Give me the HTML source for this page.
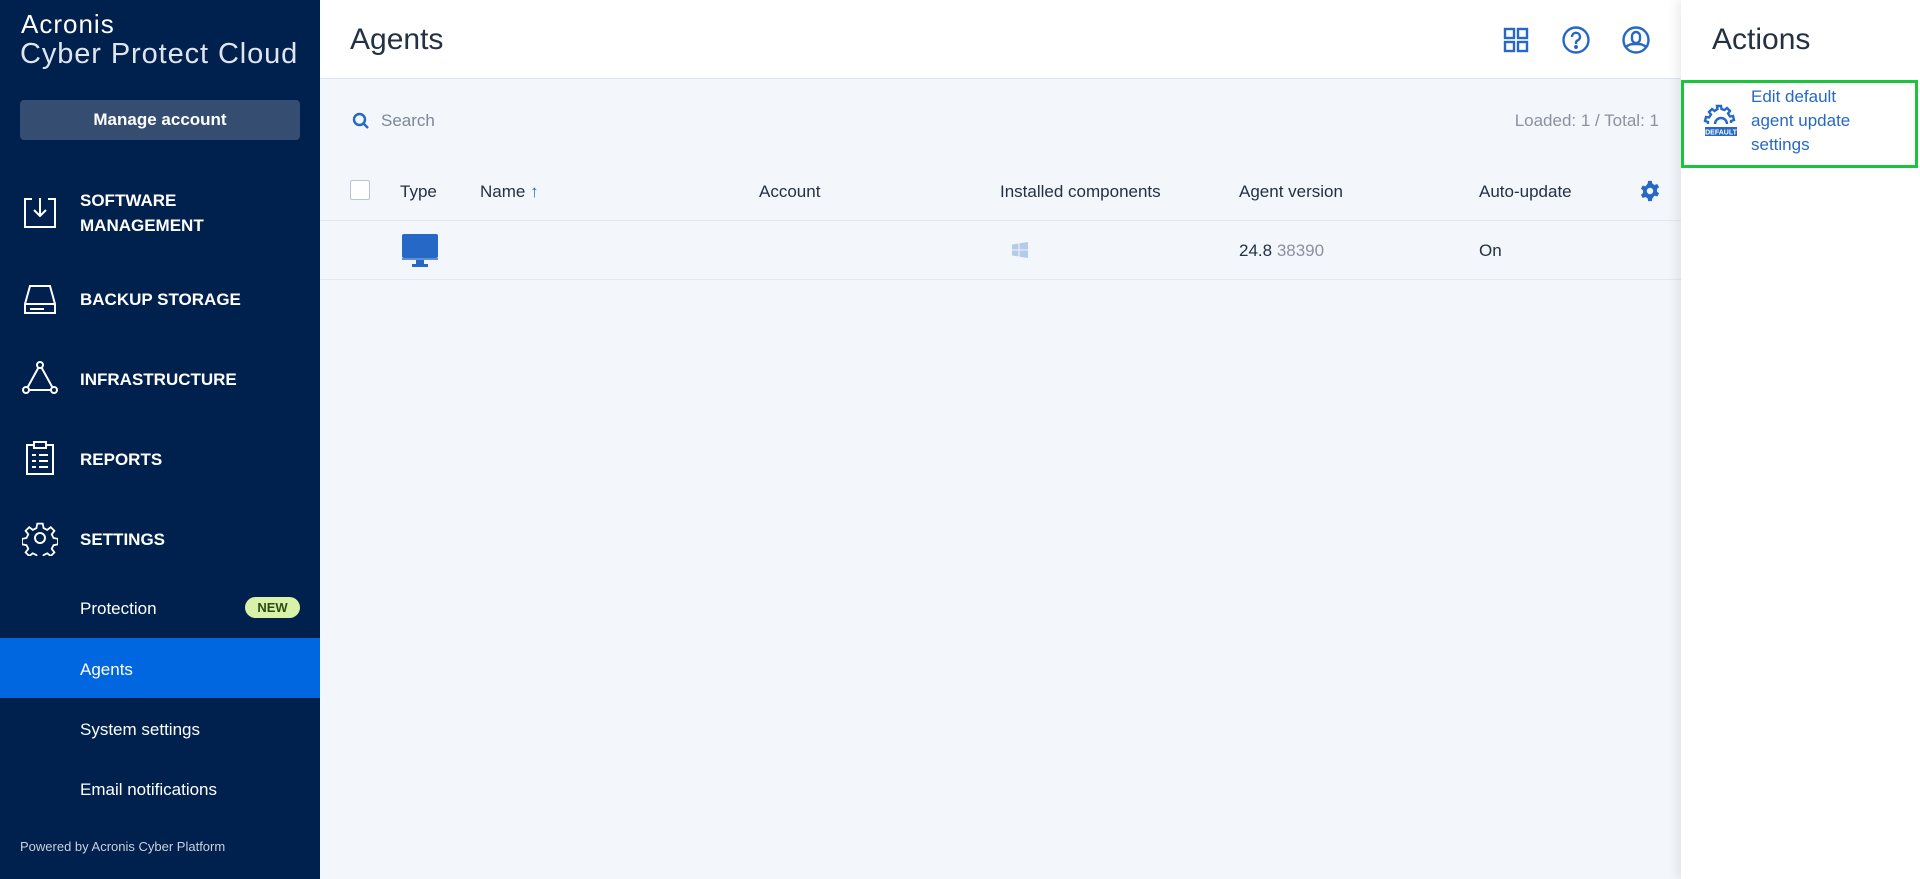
<!DOCTYPE html>
<html><head><meta charset="utf-8"><style>
*{box-sizing:border-box;margin:0;padding:0}
body{width:1920px;height:879px;overflow:hidden;font-family:"Liberation Sans",sans-serif;background:#f3f6fb;position:relative;color:#243143}
.side{position:absolute;left:0;top:0;width:320px;height:879px;background:#00204d;color:#fff}
.abs{position:absolute}
.nav{position:absolute;left:80px;font-weight:bold;font-size:17px;line-height:25px}
.ico{position:absolute;left:22px}
.sub{position:absolute;left:80px;font-size:17px;transform:translateY(-50%)}
.main{position:absolute;left:320px;top:0;width:1361px;height:879px}
.hdr{position:absolute;left:0;top:0;width:1361px;height:79px;background:#fff;border-bottom:1px solid #dde4ef}
.th{position:absolute;top:182px;font-size:17px;color:#243143}
.right{position:absolute;left:1681px;top:0;width:239px;height:879px;background:#fff;box-shadow:-4px 0 10px rgba(0,0,0,.08)}
</style></head><body>
<div class="side">
 <div class="abs" style="left:21px;top:9px;font-size:26px;letter-spacing:1px">Acronis</div>
 <div class="abs" style="left:20px;top:38px;font-size:29px;letter-spacing:.9px;color:#dfe5ee">Cyber Protect Cloud</div>
 <div class="abs" style="left:20px;top:100px;width:280px;height:40px;background:#354d70;border-radius:4px;text-align:center;line-height:40px;font-weight:bold;font-size:17px">Manage account</div>

 <svg class="ico" style="top:195px" width="36" height="36" viewBox="0 0 36 36" fill="none" stroke="#fff" stroke-width="2"><path d="M10 4H3v28h30V4h-7M18 3v18M12 15l6 6 6-6"/></svg>
 <div class="nav" style="top:188px">SOFTWARE<br>MANAGEMENT</div>

 <svg class="ico" style="top:282px" width="36" height="36" viewBox="0 0 36 36" fill="none" stroke="#fff" stroke-width="2"><path d="M8 4h20l5 18v9H3v-9zM3 22h30M8 27h14"/></svg>
 <div class="nav" style="top:287px">BACKUP STORAGE</div>

 <svg class="ico" style="top:360px" width="36" height="36" viewBox="0 0 36 36" fill="none" stroke="#fff" stroke-width="2"><circle cx="18" cy="5" r="3"/><circle cx="4" cy="30" r="3"/><circle cx="32" cy="30" r="3"/><path d="M16.5 7.5L5.5 27.5M19.5 7.5l11 20M7 30h22"/></svg>
 <div class="nav" style="top:367px">INFRASTRUCTURE</div>

 <svg class="ico" style="top:440px" width="36" height="36" viewBox="0 0 36 36" fill="none" stroke="#fff" stroke-width="2"><path d="M12 5H5v29h26V5h-7M12 2h12v6H12zM10 15h4M17 15h9M10 21h4M17 21h9M10 27h4M17 27h9"/></svg>
 <div class="nav" style="top:447px">REPORTS</div>

 <svg class="ico" style="top:520px" width="36" height="36" viewBox="0 0 36 36" fill="none" stroke="#fff" stroke-width="2"><circle cx="18" cy="18" r="5"/><path d="M15 2h6l1 5 4 2 4-3 4 4-3 4 2 4 5 1v6l-5 1-2 4 3 4-4 4-4-3-4 2-1 5h-6l-1-5-4-2-4 3-4-4 3-4-2-4-5-1v-6l5-1 2-4-3-4 4-4 4 3 4-2z" transform="scale(.9) translate(2 2)"/></svg>
 <div class="nav" style="top:527px">SETTINGS</div>

 <div class="sub" style="top:609px">Protection</div>
 <div class="abs" style="left:245px;top:597px;width:55px;height:21px;border-radius:11px;background:#d9f1a8;color:#2a4d14;font-size:13px;font-weight:bold;text-align:center;line-height:21px">NEW</div>
 <div class="abs" style="left:0;top:638px;width:320px;height:60px;background:#0067e0"></div>
 <div class="sub" style="top:670px">Agents</div>
 <div class="sub" style="top:730px">System settings</div>
 <div class="sub" style="top:790px">Email notifications</div>
 <div class="abs" style="left:20px;top:839px;font-size:13px;color:#c8d1de">Powered by Acronis Cyber Platform</div>
</div>

<div class="main">
 <div class="hdr">
  <div class="abs" style="left:30px;top:23px;font-size:30px;color:#243143">Agents</div>
  <svg class="abs" style="left:1183px;top:27px" width="26" height="26" viewBox="0 0 26 26" fill="none" stroke="#2668c5" stroke-width="2.4"><rect x="2" y="2" width="9" height="9"/><rect x="15" y="2" width="9" height="9"/><rect x="2" y="15" width="9" height="9"/><rect x="15" y="15" width="9" height="9"/></svg>
  <svg class="abs" style="left:1241px;top:25px" width="30" height="30" viewBox="0 0 30 30" fill="none" stroke="#2668c5" stroke-width="2.4"><circle cx="15" cy="15" r="12.5"/><path d="M11 12a4 4 0 1 1 5.5 3.5c-1 .5-1.5 1.3-1.5 2.5v1"/><circle cx="15" cy="22" r=".8" fill="#2668c5"/></svg>
  <svg class="abs" style="left:1301px;top:25px" width="30" height="30" viewBox="0 0 30 30" fill="none" stroke="#2668c5" stroke-width="2.4"><circle cx="15" cy="15" r="12.5"/><rect x="11" y="7" width="8" height="11" rx="4"/><path d="M5 22c3-3 6-3 10-3s7 0 10 3"/></svg>
 </div>
 <svg class="abs" style="left:32px;top:112px" width="18" height="18" viewBox="0 0 18 18" fill="none" stroke="#2668c5" stroke-width="2.4"><circle cx="7.5" cy="7.5" r="5.5"/><path d="M11.5 11.5L16 16"/></svg>
 <div class="abs" style="left:61px;top:111px;font-size:17px;color:#7d8896">Search</div>
 <div class="abs" style="right:22px;top:111px;font-size:17px;color:#8a929e">Loaded: 1 / Total: 1</div>

 <div class="abs" style="left:30px;top:180px;width:20px;height:20px;border:1px solid #b7c4d8;border-radius:2px;background:#fff"></div>
 <div class="th" style="left:80px">Type</div>
 <div class="th" style="left:160px">Name <span style="color:#2668c5">&#8593;</span></div>
 <div class="th" style="left:439px">Account</div>
 <div class="th" style="left:680px">Installed components</div>
 <div class="th" style="left:919px">Agent version</div>
 <div class="th" style="left:1159px">Auto-update</div>
 <svg class="abs" style="left:1319px;top:180px" width="22" height="22" viewBox="0 0 24 24" fill="#2668c5"><path d="M10 1h4l.6 3 2.4 1.4 2.9-1 2 3.4-2.3 2v2.8l2.3 2-2 3.4-2.9-1L14.6 20 14 23h-4l-.6-3L7 18.6l-2.9 1-2-3.4 2.3-2v-2.8l-2.3-2 2-3.4 2.9 1L9.4 4z"/><circle cx="12" cy="12" r="3.5" fill="#f3f6fb"/></svg>
 <div class="abs" style="left:0;top:220px;width:1361px;height:1px;background:#e2e8f1"></div>
 <svg class="abs" style="left:82px;top:234px" width="36" height="34" viewBox="0 0 36 34" fill="#2668c5"><rect x="0" y="0" width="36" height="24" rx="2"/><rect x="0" y="24" width="36" height="2" fill="#5e8fd6"/><rect x="14" y="26" width="8" height="5"/><rect x="10" y="30" width="16" height="3"/></svg>
 <svg class="abs" style="left:692px;top:242px" width="16" height="16" viewBox="0 0 16 16" fill="#b6cbea"><path d="M0 2.5l6.5-1v6H0zM7.5 1.3L16 0v7.5H7.5zM0 8.5h6.5v6L0 13.5zM7.5 8.5H16V16l-8.5-1.3z"/></svg>
 <div class="abs" style="left:919px;top:241px;font-size:17px">24.8 <span style="color:#8a929e">38390</span></div>
 <div class="abs" style="left:1159px;top:241px;font-size:17px">On</div>
 <div class="abs" style="left:0;top:279px;width:1361px;height:1px;background:#e2e8f1"></div>
</div>

<div class="right">
 <div class="abs" style="left:31px;top:23px;font-size:30px;color:#243143">Actions</div>
 <div class="abs" style="left:0;top:80px;width:237px;height:88px;border:3px solid #1ac43c"></div>
 <svg class="abs" style="left:22px;top:102px" width="36" height="36" viewBox="0 0 36 36"><path fill="none" stroke="#2668c5" stroke-width="2.4" d="M5 22a13 13 0 0 1 0-2l-3-1 1-4 3 .5 2-3-2-2.5 3-3 2.5 2 3-2L14 4h4l.5 3 3 1 2.5-2 3 3-2 2.5 2 3 3-.5 1 4-3 1v2M12 22a6 6 0 0 1 12 0"/><rect x="2" y="25" width="32" height="9" fill="#2668c5"/><text x="18" y="32.5" font-size="7" font-weight="bold" fill="#fff" text-anchor="middle" font-family="Liberation Sans">DEFAULT</text></svg>
 <div class="abs" style="left:70px;top:85px;font-size:17px;line-height:24px;color:#2668c5">Edit default<br>agent update<br>settings</div>
</div>
</body></html>
